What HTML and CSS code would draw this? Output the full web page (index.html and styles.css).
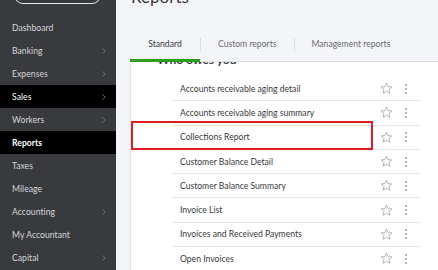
FILE: index.html
```html
<!DOCTYPE html>
<html>
<head>
<meta charset="utf-8">
<link rel="stylesheet" href="styles.css">
</head>
<body>
<div class="app">
  <nav class="sidebar">
    <div class="new-btn"></div>
    <ul class="menu">
      <li class="item"><span>Dashboard</span></li>
      <li class="item"><span>Banking</span><svg class="chev" viewBox="0 0 4 6"><path d="M0.5 0.5 L3.2 3 L0.5 5.5"/></svg></li>
      <li class="item"><span>Expenses</span><svg class="chev" viewBox="0 0 4 6"><path d="M0.5 0.5 L3.2 3 L0.5 5.5"/></svg></li>
      <li class="item active"><span>Sales</span><svg class="chev" viewBox="0 0 4 6"><path d="M0.5 0.5 L3.2 3 L0.5 5.5"/></svg></li>
      <li class="item"><span>Workers</span><svg class="chev" viewBox="0 0 4 6"><path d="M0.5 0.5 L3.2 3 L0.5 5.5"/></svg></li>
      <li class="item active current"><span>Reports</span></li>
      <li class="item"><span>Taxes</span></li>
      <li class="item"><span>Mileage</span></li>
      <li class="item"><span>Accounting</span><svg class="chev" viewBox="0 0 4 6"><path d="M0.5 0.5 L3.2 3 L0.5 5.5"/></svg></li>
      <li class="item"><span>My Accountant</span></li>
      <li class="item"><span>Capital</span><svg class="chev" viewBox="0 0 4 6"><path d="M0.5 0.5 L3.2 3 L0.5 5.5"/></svg></li>
    </ul>
  </nav>
  <main class="main">
    <h1 class="title">Reports</h1>
    <div class="tabs">
      <div class="tab active">Standard</div>
      <div class="sep"></div>
      <div class="tab">Custom reports</div>
      <div class="sep"></div>
      <div class="tab">Management reports</div>
    </div>
    <section class="panel">
      <h2 class="group">Who owes you</h2>
      <div class="list">
        <div class="row"><span class="name">Accounts receivable aging detail</span><svg class="star" viewBox="0 0 14 14"><path d="M7 1.2 L8.7 5 L12.8 5.3 L9.7 8 L10.6 12.1 L7 10 L3.4 12.1 L4.3 8 L1.2 5.3 L5.3 5 Z"/></svg><span class="kebab"><i></i><i></i><i></i></span></div>
        <div class="row"><span class="name">Accounts receivable aging summary</span><svg class="star" viewBox="0 0 14 14"><path d="M7 1.2 L8.7 5 L12.8 5.3 L9.7 8 L10.6 12.1 L7 10 L3.4 12.1 L4.3 8 L1.2 5.3 L5.3 5 Z"/></svg><span class="kebab"><i></i><i></i><i></i></span></div>
        <div class="row"><span class="name">Collections Report</span><svg class="star" viewBox="0 0 14 14"><path d="M7 1.2 L8.7 5 L12.8 5.3 L9.7 8 L10.6 12.1 L7 10 L3.4 12.1 L4.3 8 L1.2 5.3 L5.3 5 Z"/></svg><span class="kebab"><i></i><i></i><i></i></span></div>
        <div class="row"><span class="name">Customer Balance Detail</span><svg class="star" viewBox="0 0 14 14"><path d="M7 1.2 L8.7 5 L12.8 5.3 L9.7 8 L10.6 12.1 L7 10 L3.4 12.1 L4.3 8 L1.2 5.3 L5.3 5 Z"/></svg><span class="kebab"><i></i><i></i><i></i></span></div>
        <div class="row"><span class="name">Customer Balance Summary</span><svg class="star" viewBox="0 0 14 14"><path d="M7 1.2 L8.7 5 L12.8 5.3 L9.7 8 L10.6 12.1 L7 10 L3.4 12.1 L4.3 8 L1.2 5.3 L5.3 5 Z"/></svg><span class="kebab"><i></i><i></i><i></i></span></div>
        <div class="row"><span class="name">Invoice List</span><svg class="star" viewBox="0 0 14 14"><path d="M7 1.2 L8.7 5 L12.8 5.3 L9.7 8 L10.6 12.1 L7 10 L3.4 12.1 L4.3 8 L1.2 5.3 L5.3 5 Z"/></svg><span class="kebab"><i></i><i></i><i></i></span></div>
        <div class="row"><span class="name">Invoices and Received Payments</span><svg class="star" viewBox="0 0 14 14"><path d="M7 1.2 L8.7 5 L12.8 5.3 L9.7 8 L10.6 12.1 L7 10 L3.4 12.1 L4.3 8 L1.2 5.3 L5.3 5 Z"/></svg><span class="kebab"><i></i><i></i><i></i></span></div>
        <div class="row"><span class="name">Open Invoices</span><svg class="star" viewBox="0 0 14 14"><path d="M7 1.2 L8.7 5 L12.8 5.3 L9.7 8 L10.6 12.1 L7 10 L3.4 12.1 L4.3 8 L1.2 5.3 L5.3 5 Z"/></svg><span class="kebab"><i></i><i></i><i></i></span></div>
        <div class="highlight"></div>
      </div>
    </section>
  </main>
</div>
</body>
</html>
```
FILE: styles.css
```css
* { box-sizing: border-box; }
html, body { margin: 0; padding: 0; }
body {
  width: 438px;
  height: 270px;
  overflow: hidden;
  font-family: Lato, "Open Sans", sans-serif;
  background: #f4f5f8;
}
.app {
  display: flex;
  height: 270px;
}
.sidebar {
  width: 116px;
  flex: none;
  background: #393a3d;
  color: #d4d7dc;
}
.new-btn {
  width: 87px;
  height: 24px;
  margin: -20px 0 0 14px;
  border: 1.5px solid #e8e9eb;
  border-radius: 9px;
}
.menu {
  list-style: none;
  margin: 12px 0 0;
  padding: 0;
}
.item {
  height: 23px;
  display: flex;
  align-items: center;
  justify-content: space-between;
  padding: 0 10px 0 12px;
  font-size: 8.6px;
  letter-spacing: 0.05px;
}
.item.active {
  background: #000;
  color: #fff;
}
.item.current { font-weight: 700; }
.chev {
  width: 4px;
  height: 6px;
  fill: none;
  stroke: #6b6c72;
  stroke-width: 1;
}
.main {
  flex: 1;
  display: flex;
  flex-direction: column;
  min-width: 0;
}
.title {
  margin: -12px 0 0 15px;
  height: 18px;
  font-size: 17px;
  line-height: 18px;
  font-weight: 400;
  color: #393a3d;
}
.tabs {
  margin: 22px 0 0 14px;
  height: 34px;
  flex: none;
  display: flex;
  align-items: center;
  border-bottom: 1px solid #dcdde1;
}
.tab {
  height: 34px;
  display: flex;
  align-items: center;
  padding: 0 17px 1px;
  font-size: 8.6px;
  color: #6b6c72;
}
.tab.active {
  width: 70px;
  justify-content: center;
  padding: 0;
  color: #393a3d;
  margin-bottom: -1px;
  border-bottom: 3px solid #2ca01c;
}
.sep {
  width: 1px;
  height: 13px;
  background: #dcdde1;
}
.panel {
  flex: 1;
  margin-left: 14px;
  background: #fff;
  border-left: 1px solid #e3e5e8;
  overflow: hidden;
}
.group {
  margin: -9px 0 0 26px;
  height: 24px;
  font-size: 12px;
  line-height: 14px;
  font-weight: 700;
  color: #393a3d;
}
.list {
  position: relative;
  margin-left: 41px;
  width: 249px;
}
.row {
  height: 24.3px;
  display: flex;
  align-items: center;
  padding-left: 8px;
  border-bottom: 1px solid #e3e5e8;
  font-size: 8.6px;
  color: #393a3d;
}
.row:last-of-type { border-bottom: none; }
.name { flex: 1; }
.star {
  width: 13px;
  height: 13px;
  fill: none;
  stroke: #a3a5aa;
  stroke-width: 0.9;
  stroke-linejoin: round;
  margin-right: 12px;
}
.kebab {
  width: 2px;
  display: flex;
  flex-direction: column;
  gap: 2px;
  margin-right: 14px;
}
.kebab i {
  display: block;
  width: 2px;
  height: 2px;
  border-radius: 1px;
  background: #9a9ca1;
}
.highlight {
  position: absolute;
  left: -41px;
  top: 44px;
  width: 242px;
  height: 29px;
  border: 2.5px solid #e11d23;
}
```
